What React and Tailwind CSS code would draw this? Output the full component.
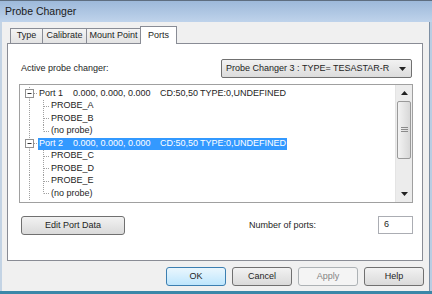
import React from 'react';

const font = "font-['Liberation_Sans',Arial,sans-serif]";

// tree rows: alternating heights keep the 12.5px pitch on whole pixels
const rows = [
  { kind: 'port', label: 'Port 1', selected: false },
  { kind: 'child', label: 'PROBE_A' },
  { kind: 'child', label: 'PROBE_B' },
  { kind: 'child', label: '(no probe)', last: true },
  { kind: 'port', label: 'Port 2', selected: true },
  { kind: 'child', label: 'PROBE_C' },
  { kind: 'child', label: 'PROBE_D' },
  { kind: 'child', label: 'PROBE_E' },
  { kind: 'child', label: '(no probe)', last: true },
];

const Dots = ({ x1, y1, x2, y2 }) => (
  <line x1={x1} y1={y1} x2={x2} y2={y2} stroke="#a0a0a0" strokeWidth="1" strokeDasharray="1 1" />
);

const RowLines = ({ row, h }) => {
  const mid = Math.floor(h / 2) + 0.5;
  if (row.kind === 'port') {
    return (
      <svg width="18" height={h} className="shrink-0">
        <Dots x1={9.5} y1={0} x2={9.5} y2={mid - 4.5} />
        <Dots x1={9.5} y1={mid + 5} x2={9.5} y2={h} />
        <rect x="5.5" y={mid - 4} width="8" height="8" fill="#fff" stroke="#919191" />
        <line x1="7.5" y1={mid} x2="11.5" y2={mid} stroke="#333" />
        <Dots x1={14} y1={mid} x2={18} y2={mid} />
      </svg>
    );
  }
  return (
    <svg width="31" height={h} className="shrink-0">
      <Dots x1={9.5} y1={0} x2={9.5} y2={h} />
      <Dots x1={23.5} y1={0} x2={23.5} y2={row.last ? mid : h} />
      <Dots x1={24} y1={mid} x2={30} y2={mid} />
    </svg>
  );
};

const PortText = ({ label, selected }) => (
  <div
    className={`flex items-center h-[12px] px-[1px] whitespace-pre ${
      selected ? 'bg-[#3399ff] text-white' : 'text-[#1e1e1e]'
    }`}
  >
    <span className="w-[34px]">{label}</span>
    <span className="w-[87px]">0.000, 0.000, 0.000</span>
    <span className="w-[40px]">CD:50,50</span>
    <span>TYPE:0,UNDEFINED</span>
  </div>
);

const Tree = () => (
  <div className="flex h-[119px] mx-[11px] mt-[6px] mr-[9px] border border-[#a0a0a0] bg-white">
    <div className="flex-1 pt-[2px] overflow-hidden">
      {rows.map((row, i) => {
        const h = i % 2 === 0 ? 13 : 12;
        return (
          <div key={i} className={`flex items-center ${i % 2 === 0 ? 'h-[13px]' : 'h-[12px]'}`}>
            <RowLines row={row} h={h} />
            {row.kind === 'port' ? (
              <PortText label={row.label} selected={row.selected} />
            ) : (
              <span className="text-[#1e1e1e]">{row.label}</span>
            )}
          </div>
        );
      })}
    </div>
    {/* scrollbar */}
    <div className="w-[17px] flex flex-col bg-[#ececec] border-l border-[#e4e4e4]">
      <div className="h-[16px] flex items-center justify-center">
        <svg width="7" height="4"><path d="M0 4 L3.5 0 L7 4 Z" fill="#222" /></svg>
      </div>
      <div className="h-[58px] mx-[1px] rounded-[2px] border border-[#9a9a9a] bg-gradient-to-r from-[#f3f3f3] to-[#d8d8d8] flex items-center justify-center">
        <svg width="7" height="6">
          <path d="M0 0.5 H7 M0 2.5 H7 M0 4.5 H7" stroke="#8a8a8a" />
        </svg>
      </div>
      <div className="flex-1" />
      <div className="h-[16px] flex items-center justify-center">
        <svg width="7" height="4"><path d="M0 0 L7 0 L3.5 4 Z" fill="#222" /></svg>
      </div>
    </div>
  </div>
);

const Tab = ({ label, w }) => (
  <div
    className={`${w} h-[16px] mt-[2px] flex items-center justify-center border border-r-0 border-[#898c95] bg-gradient-to-b from-[#f4f4f4] to-[#e3e3e3] text-[#1e1e1e]`}
  >
    {label}
  </div>
);

const Button = ({ children, variant }) => {
  const styles = {
    normal: 'border-[#707070] bg-gradient-to-b from-[#f2f2f2] to-[#dadada] text-[#1e1e1e]',
    default: 'border-[#3c7fb1] bg-gradient-to-b from-[#eaf6fd] to-[#bee6fd] text-[#1e1e1e]',
    disabled: 'border-[#adb2b5] bg-[#f4f4f4] text-[#838383]',
  };
  return (
    <div className={`w-[60px] h-[19px] flex items-center justify-center rounded-[3px] border ${styles[variant]}`}>
      {children}
    </div>
  );
};

export default function App() {
  return (
    <div className={`w-[432px] h-[294px] flex flex-col overflow-hidden text-[9px] ${font}`}>
      {/* title bar */}
      <div className="h-[22px] flex items-center pl-[5px] border-t border-[#5e6e80] bg-gradient-to-b from-[#9db9da] to-[#bfd3eb] text-[10.5px] text-[#1a1a1a]">
        Probe Changer
      </div>

      <div className="flex-1 flex">
        <div className="w-[2px] bg-[#c3d3e4]" />
        <div className="flex-1 flex flex-col bg-[#f0f0f0]">
          {/* tabs */}
          <div className="flex pl-[8px] mt-[4px] h-[18px] relative z-10">
            <Tab label="Type" w="w-[32px]" />
            <Tab label="Calibrate" w="w-[44px]" />
            <Tab label="Mount Point" w="w-[54px]" />
            <div className="w-[37px] h-[18px] flex items-center justify-center border border-b-0 border-[#898c95] bg-white text-[#1e1e1e]">
              Ports
            </div>
          </div>

          {/* tab panel */}
          <div className="ml-[5px] mr-[6px] -mt-px h-[218px] border border-[#898c95] bg-white flex flex-col">
            <div className="flex items-center justify-between mt-[15px] pl-[13px] pr-[10px]">
              <span className="text-[#1e1e1e]">Active probe changer:</span>
              <div className="w-[191px] h-[19px] flex items-center justify-between pl-[4px] pr-[5px] rounded-[2px] border border-[#707070] bg-gradient-to-b from-[#f2f2f2] to-[#dcdcdc] text-[#1e1e1e]">
                <span>Probe Changer 3 : TYPE= TESASTAR-R</span>
                <svg width="7" height="4"><path d="M0 0 L7 0 L3.5 4 Z" fill="#222" /></svg>
              </div>
            </div>

            <Tree />

            <div className="flex items-center mt-[13px] pl-[13px] pr-[9px]">
              <div className="w-[104px] h-[19px] flex items-center justify-center rounded-[3px] border border-[#707070] bg-gradient-to-b from-[#f2f2f2] to-[#dadada] text-[#1e1e1e]">
                Edit Port Data
              </div>
              <span className="ml-[124px] text-[#1e1e1e]">Number of ports:</span>
              <div className="ml-auto w-[35px] h-[18px] -mt-[2px] flex items-center pl-[5px] border border-[#abadb3] bg-white text-[#1e1e1e]">
                6
              </div>
            </div>
          </div>

          {/* dialog buttons */}
          <div className="flex justify-end gap-[6px] mt-[6px] pr-[5px]">
            <Button variant="default">OK</Button>
            <Button variant="normal">Cancel</Button>
            <Button variant="disabled">Apply</Button>
            <Button variant="normal">Help</Button>
          </div>
        </div>
        <div className="w-[3px] border-l border-[#7d8fa3] bg-[#b9cde3]" />
      </div>
      <div className="h-[3px] bg-[#3a87a8]" />
    </div>
  );
}
